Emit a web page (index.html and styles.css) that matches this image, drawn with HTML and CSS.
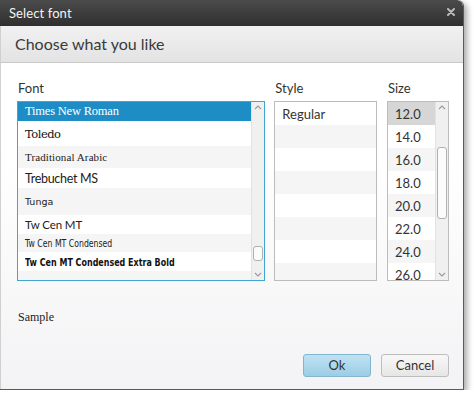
FILE: index.html
```html
<!DOCTYPE html>
<html>
<head>
<meta charset="utf-8">
<link rel="stylesheet" href="styles.css">
</head>
<body>
<div class="dialog">
  <div class="titlebar">
    <span class="title">Select font</span>
    <svg class="close" width="8" height="8" viewBox="0 0 8 8"><path d="M1 1L7 7M7 1L1 7" stroke="#b9b9b9" stroke-width="2" stroke-linecap="round"/></svg>
  </div>
  <div class="header">Choose what you like</div>
  <div class="body">
    <div class="columns">
      <div class="col col-font">
        <div class="label">Font</div>
        <div class="list list-font">
          <div class="rows">
            <div class="row sel f-times" style="height:19px">Times New Roman</div>
            <div class="row f-toledo" style="height:25px">Toledo</div>
            <div class="row alt f-arabic" style="height:22px">Traditional Arabic</div>
            <div class="row f-treb" style="height:20px">Trebuchet MS</div>
            <div class="row alt f-tunga" style="height:27px">Tunga</div>
            <div class="row f-twcen" style="height:19px">Tw Cen MT</div>
            <div class="row alt f-cond" style="height:18px"><span class="narrow">Tw Cen MT Condensed</span></div>
            <div class="row f-bold" style="height:19px"><span class="narrow">Tw Cen MT Condensed Extra Bold</span></div>
            <div class="row alt" style="height:12px"></div>
          </div>
          <div class="scrollbar">
            <svg class="arrow" width="12" height="12" viewBox="0 0 12 12"><path d="M3 7L6 4L9 7" fill="none" stroke="#9a9a9a" stroke-width="1.1"/></svg>
            <div class="track"><div class="thumb" style="top:132px;height:15px"></div></div>
            <svg class="arrow" width="12" height="12" viewBox="0 0 12 12"><path d="M3 5L6 8L9 5" fill="none" stroke="#9a9a9a" stroke-width="1.1"/></svg>
          </div>
        </div>
      </div>
      <div class="col col-style">
        <div class="label">Style</div>
        <div class="list list-plain">
          <div class="rows">
            <div class="row r23">Regular</div>
            <div class="row r23 alt"></div>
            <div class="row r23"></div>
            <div class="row r23 alt"></div>
            <div class="row r23"></div>
            <div class="row r23 alt"></div>
            <div class="row r23"></div>
            <div class="row r23 alt"></div>
          </div>
        </div>
      </div>
      <div class="col col-size">
        <div class="label">Size</div>
        <div class="list list-plain">
          <div class="rows">
            <div class="row r23 gsel">12.0</div>
            <div class="row r23">14.0</div>
            <div class="row r23 alt">16.0</div>
            <div class="row r23">18.0</div>
            <div class="row r23 alt">20.0</div>
            <div class="row r23">22.0</div>
            <div class="row r23 alt">24.0</div>
            <div class="row r23">26.0</div>
          </div>
          <div class="scrollbar">
            <svg class="arrow" width="12" height="12" viewBox="0 0 12 12"><path d="M3 7L6 4L9 7" fill="none" stroke="#9a9a9a" stroke-width="1.1"/></svg>
            <div class="track"><div class="thumb" style="top:33px;height:72px"></div></div>
            <svg class="arrow" width="12" height="12" viewBox="0 0 12 12"><path d="M3 5L6 8L9 5" fill="none" stroke="#9a9a9a" stroke-width="1.1"/></svg>
          </div>
        </div>
      </div>
    </div>
    <div class="sample">Sample</div>
    <div class="buttons">
      <div class="btn btn-ok">Ok</div>
      <div class="btn btn-cancel">Cancel</div>
    </div>
  </div>
</div>
</body>
</html>
```

FILE: styles.css
```css
html, body {
  margin: 0;
  padding: 0;
  background: #ffffff;
}
body {
  font-family: Lato, "Open Sans", sans-serif;
  color: #333;
}
.dialog {
  width: 463px;
  height: 389px;
  border-right: 1px solid #5a5a5a;
  border-bottom: 1px solid #5a5a5a;
  border-top-right-radius: 6px;
  box-shadow: 3px 3px 6px rgba(0,0,0,0.35);
  display: flex;
  flex-direction: column;
  overflow: hidden;
  background: linear-gradient(#ffffff 0%, #ffffff 40%, #f3f3f5 100%);
}
.titlebar {
  height: 26px;
  flex: none;
  background: linear-gradient(#4b4b4b, #2f2f2f);
  display: flex;
  align-items: center;
  justify-content: space-between;
  padding: 0 8px 0 9px;
  border-top-right-radius: 6px;
}
.title {
  color: #f4f4f4;
  font-size: 13px;
  letter-spacing: 0.1px;
}
.close {
  display: block;
  margin-top: -2px;
}
.header {
  height: 37px;
  flex: none;
  box-sizing: border-box;
  background: linear-gradient(#f1f1f1, #e3e3e3);
  border-bottom: 1px solid #c9c9c9;
  border-left: 1px solid #d0d0d0;
  padding-left: 14px;
  font-size: 16px;
  line-height: 36px;
  color: #3a3a3a;
}
.body {
  flex: 1;
  display: flex;
  flex-direction: column;
  padding: 16px 14px 0 16px;
  border-left: 1px solid #d0d0d0;
}
.columns {
  display: flex;
  gap: 9px;
}
.label {
  font-size: 13px;
  line-height: 18px;
  height: 18px;
  margin-bottom: 4px;
  color: #333;
  padding-left: 1px;
}
.col-font { width: 249px; }
.col-style { width: 103px; }
.col-size { width: 62px; margin-left: 1px; }
.list {
  height: 180px;
  box-sizing: border-box;
  display: flex;
  overflow: hidden;
  background: #fff;
}
.list-font {
  border: 1px solid #3fa6cf;
}
.list-plain {
  border: 1px solid #bcbcbc;
}
.rows {
  flex: 1;
  display: flex;
  flex-direction: column;
  min-width: 0;
}
.row {
  flex: none;
  display: flex;
  align-items: center;
  box-sizing: border-box;
  padding-left: 7px;
  white-space: nowrap;
  color: #222;
  background: #ffffff;
}
.row.alt { background: #f5f5f5; }
.row.sel { background: #1e8dc5; color: #fff; }
.row.gsel { background: #d6d6d6; }
.r23 {
  height: 23px;
  font-size: 13px;
  color: #333;
}
.col-style .row { padding-left: 7px; }
.col-size .row { padding-left: 7px; width: 49px; }
.f-times { font-family: "Liberation Serif", serif; font-size: 12.5px; letter-spacing: -0.2px; }
.f-toledo { font-family: "DejaVu Serif", serif; font-size: 11.5px; letter-spacing: -0.5px; color: #111; }
.f-arabic { font-family: "Liberation Serif", serif; font-size: 11px; letter-spacing: 0.1px; }
.f-treb { font-family: Lato, sans-serif; font-size: 12.5px; letter-spacing: -0.3px; }
.f-tunga { font-family: "DejaVu Sans", sans-serif; font-size: 9.5px; }
.f-twcen { font-family: Lato, sans-serif; font-size: 11.5px; letter-spacing: -0.1px; }
.f-cond { font-family: "DejaVu Sans", sans-serif; font-size: 10.5px; }
.f-bold { font-family: "DejaVu Sans", sans-serif; font-weight: bold; font-size: 10.5px; color: #111; }
.narrow {
  display: inline-block;
  transform: scaleX(0.74);
  transform-origin: left center;
}
.f-bold .narrow { transform: scaleX(0.76); }
.scrollbar {
  width: 12px;
  flex: none;
  display: flex;
  flex-direction: column;
  background: #f0f0f0;
  border-left: 1px solid #e2e2e2;
}
.arrow {
  display: block;
  flex: none;
}
.track {
  flex: 1;
  position: relative;
}
.thumb {
  position: absolute;
  left: 1px;
  right: 1px;
  box-sizing: border-box;
  background: #fbfbfb;
  border: 1px solid #b0b0b0;
  border-radius: 3px;
}
.sample {
  margin-top: 28px;
  font-family: "Liberation Serif", serif;
  font-size: 12px;
  line-height: 16px;
  height: 16px;
  color: #222;
  padding-left: 1px;
}
.buttons {
  display: flex;
  justify-content: flex-end;
  gap: 10px;
  margin-top: 29px;
}
.btn {
  width: 68px;
  height: 23px;
  box-sizing: border-box;
  border-radius: 3px;
  font-size: 13px;
  line-height: 21px;
  text-align: center;
  color: #333;
}
.btn-ok {
  background: linear-gradient(#bfe2f3, #9ccde5);
  border: 1px solid #82b6cf;
}
.btn-cancel {
  background: linear-gradient(#f8f8f8, #e6e6e6);
  border: 1px solid #bdbdbd;
}
```
